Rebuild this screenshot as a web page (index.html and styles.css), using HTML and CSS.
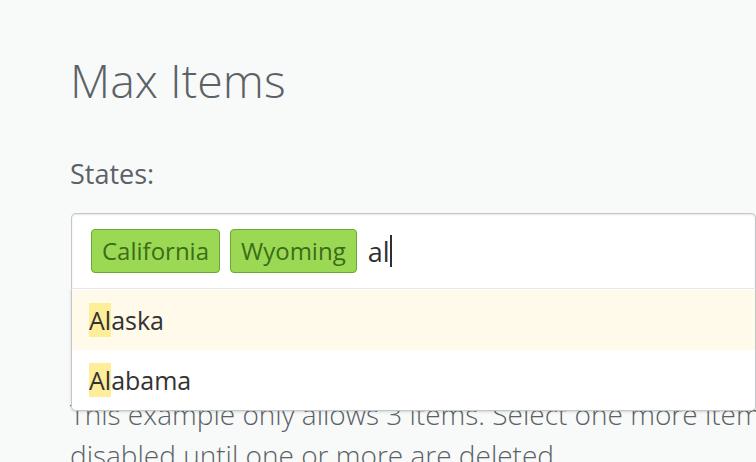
FILE: index.html
```html
<!DOCTYPE html>
<html lang="en">
<head>
    <meta charset="UTF-8">
    <title>Max Items</title>
    <link rel="stylesheet" href="styles.css">
</head>
<body>
    <!-- Demo -->
    <div class="demo">
        <h2>Max Items</h2>
        <label class="field-label">States:</label>
        <div class="selectize">
            <div class="control">
                <span class="item">California</span>
                <span class="item">Wyoming</span>
                <span class="typed">al</span><span class="caret"></span>
            </div>
            <div class="dropdown">
                <div class="option active"><span class="hl">Al</span>aska</div>
                <div class="option"><span class="hl">Al</span>abama</div>
            </div>
        </div>
        <p class="note">This example only allows 3 items. Select one more item and the control will be disabled until one or more are deleted.</p>
    </div>
</body>
</html>
```

FILE: styles.css
```css
/* General Styles */
body {
    margin: 0;
    padding: 0;
    background-color: #f8f9f9;
    color: #5b6266;
    font-family: 'Open Sans', 'Noto Sans', sans-serif;
    overflow: hidden;
}
.demo {
    padding: 50px 0 0 70px;
    overflow: hidden;
    height: 462px;
    box-sizing: border-box;
}
/* Heading */
.demo h2 {
    margin: 0;
    font-size: 46.5px;
    font-weight: 300;
    line-height: 60px;
}
.field-label {
    display: block;
    margin-top: 44px;
    font-size: 27px;
    line-height: 40px;
}
/* Selectize control */
.selectize {
    position: relative;
    margin-top: 19px;
}
.control {
    display: flex;
    align-items: center;
    gap: 10px;
    height: 76px;
    padding: 0 19px;
    background-color: #ffffff;
    border: 1px solid #c4c7c9;
    border-bottom-color: #ececec;
    border-radius: 5px 5px 0 0;
    box-shadow: inset 0 1px 2px rgba(0, 0, 0, 0.1);
    box-sizing: border-box;
    margin-left: 1px;
}
.item {
    display: inline-block;
    padding: 0 10px;
    height: 42px;
    line-height: 42px;
    font-size: 24px;
    color: #3b6d17;
    background-color: #9bd955;
    border: 1px solid #6aa832;
    border-radius: 4px;
}
.typed {
    font-size: 27px;
    color: #303030;
    margin-left: 1px;
}
.caret {
    display: inline-block;
    width: 2px;
    height: 32px;
    background-color: #303030;
    margin-left: -10px;
}
/* Dropdown */
.dropdown {
    position: absolute;
    top: 100%;
    left: 1px;
    right: 0;
    background-color: #ffffff;
    border: 1px solid #c4c7c9;
    border-top: none;
    border-radius: 0 0 5px 5px;
    box-shadow: 0 1px 3px rgba(0, 0, 0, 0.15);
    z-index: 2;
}
.option {
    height: 60px;
    line-height: 60px;
    padding-left: 17px;
    font-size: 25px;
    color: #333333;
}
.option:first-child {
    margin-top: 1px;
}
.option.active {
    background-color: #fffaea;
}
.hl {
    background-color: #ffee99;
}
/* Note */
.note {
    margin: 105px 0 0;
    width: 1000px;
    font-size: 28px;
    font-weight: 300;
    line-height: 41px;
}
```
